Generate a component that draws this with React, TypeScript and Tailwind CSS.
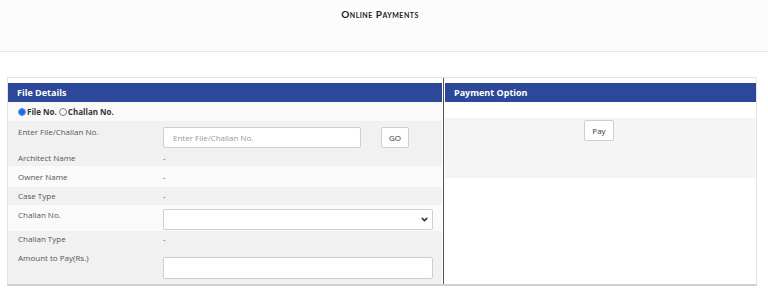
import { ChevronDown } from 'lucide-react';

const font = { fontFamily: '"Open Sans", "Noto Sans", sans-serif' };

function TextRow({ label, h, bg, pt }: { label: string; h: string; bg: string; pt: string }) {
  return (
    <div className={`flex ${h} ${bg} ${pt} text-[8px] leading-[11px] text-[#555]`}>
      <div className="w-[155px] pl-[10px]">{label}</div>
      <div>-</div>
    </div>
  );
}

function Radio({ checked }: { checked?: boolean }) {
  return checked ? (
    <span className="inline-flex h-[8px] w-[8px] items-center justify-center rounded-full border border-[#3b82f6] bg-white">
      <span className="h-[6px] w-[6px] rounded-full bg-[#1a6fe0]" />
    </span>
  ) : (
    <span className="inline-block h-[8px] w-[8px] rounded-full border border-[#777] bg-white" />
  );
}

export default function App() {
  return (
    <div className="min-h-[293px] w-[768px] bg-white" style={font}>
      <div className="flex h-[52px] justify-center border-b border-[#e6e6e6] bg-[#fcfcfc] pr-[8px] pt-[8px]">
        <h1
          className="text-[10px] font-bold leading-[12px] tracking-[0.5px] text-[#222]"
          style={{ fontVariant: 'small-caps', fontFamily: '"Lato", "Open Sans", sans-serif' }}
        >
          Online Payments
        </h1>
      </div>

      <div className="pl-[7px] pt-[25px]">
        <div className="flex w-[750px] border border-b-2 border-[#e2e2e2] border-b-[#cfcfcf] bg-white">
          {/* left: file details */}
          <div className="w-[436px] border-r border-[#555] pr-[1px] pt-[5px]">
            <div className="h-[19px] bg-[#2d4898] pl-[9px] text-[9px] font-bold leading-[19px] text-white">
              File Details
            </div>
            <div className="flex h-[19px] items-center gap-[1px] bg-[#fafafa] pl-[10px] text-[8px] font-bold text-[#333]">
              <Radio checked />
              <span className="mr-[1px]">File No.</span>
              <Radio />
              <span>Challan No.</span>
            </div>
            <div className="flex h-[29px] bg-[#f1f1f1] text-[8px] leading-[11px] text-[#555]">
              <div className="w-[155px] pl-[10px] pt-[5px]">Enter File/Challan No.</div>
              <div className="mt-[6px] flex h-[21px] w-[198px] items-center rounded-[2px] border border-[#cfcfcf] bg-white pl-[9px] text-[#999]">
                Enter File/Challan No.
              </div>
              <button className="ml-[20px] mt-[6px] h-[21px] w-[28px] rounded-[2px] border border-[#cfcfcf] bg-white text-[8px] text-[#333]">
                GO
              </button>
            </div>
            <TextRow label="Architect Name" h="h-[16px]" bg="bg-[#f1f1f1]" pt="pt-[2px]" />
            <TextRow label="Owner Name" h="h-[21px]" bg="bg-[#fafafa]" pt="pt-[5px]" />
            <TextRow label="Case Type" h="h-[18px]" bg="bg-[#f1f1f1]" pt="pt-[3px]" />
            <div className="flex h-[26px] bg-[#fafafa] text-[8px] leading-[11px] text-[#555]">
              <div className="w-[155px] pl-[10px] pt-[4px]">Challan No.</div>
              <div className="mt-[4px] flex h-[21px] w-[270px] items-center justify-end rounded-[2px] border border-[#cfcfcf] bg-white pr-[3px]">
                <ChevronDown size={9} strokeWidth={4} className="text-[#333]" />
              </div>
            </div>
            <TextRow label="Challan Type" h="h-[16px]" bg="bg-[#f1f1f1]" pt="pt-[2px]" />
            <div className="flex h-[37px] bg-[#f1f1f1] text-[8px] leading-[11px] text-[#555]">
              <div className="w-[155px] pl-[10px] pt-[5px]">Amount to Pay(Rs.)</div>
              <div className="mt-[10px] h-[22px] w-[270px] rounded-[2px] border border-[#cfcfcf] bg-white" />
            </div>
          </div>

          {/* right: payment option */}
          <div className="flex-1 pl-[1px] pt-[5px]">
            <div className="h-[19px] bg-[#2d4898] pl-[9px] text-[9px] font-bold leading-[19px] text-white">
              Payment Option
            </div>
            <div className="h-[16px]" />
            <div className="flex h-[60px] justify-center bg-[#f5f5f5] pr-[3px] pt-[2px]">
              <button className="h-[21px] w-[30px] rounded-[2px] border border-[#cfcfcf] bg-white text-[8px] text-[#333]">
                Pay
              </button>
            </div>
          </div>
        </div>
      </div>
    </div>
  );
}
